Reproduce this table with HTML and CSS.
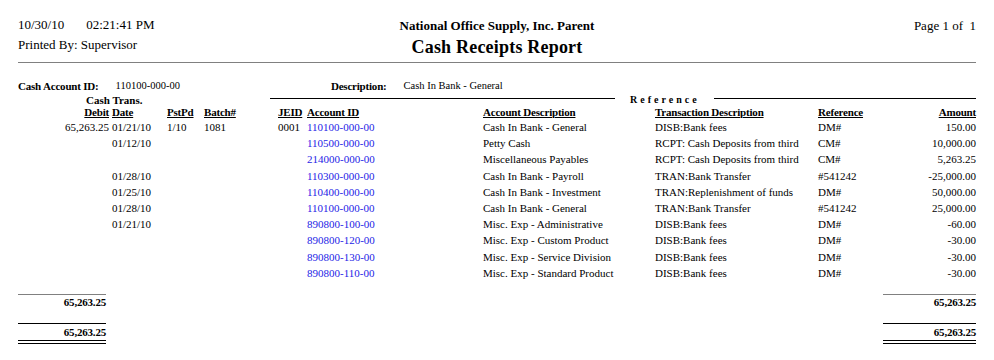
FILE: index.html
```html
<!DOCTYPE html>
<html>
<head>
<meta charset="utf-8">
<link rel="stylesheet" href="styles.css">
</head>
<body>
<div class="page">
  <header class="top">
    <div class="top-left">
      <div class="stamp"><span>10/30/10</span><span class="time">02:21:41 PM</span></div>
      <div>Printed By: Supervisor</div>
    </div>
    <div class="top-center">
      <div class="company">National Office Supply, Inc. Parent</div>
      <div class="title">Cash Receipts Report</div>
    </div>
    <div class="top-right">Page 1 of &nbsp;1</div>
  </header>

  <div class="account">
    <span class="lbl">Cash Account ID:</span><span class="val acct-val">110100-000-00</span>
    <span class="lbl desc-lbl">Description:</span><span class="val">Cash In Bank - General</span>
  </div>

  <div class="group-row">
    <div class="cash-trans">Cash Trans.</div>
    <div class="ref-group">
      <span class="rule rule-left"></span>
      <span class="ref-title">Reference</span>
      <span class="rule rule-right"></span>
    </div>
  </div>

  <div class="grid head">
    <div class="r"><u>Debit</u></div>
    <div><u>Date</u></div>
    <div><u>PstPd</u></div>
    <div><u>Batch#</u></div>
    <div><u>JEID</u></div>
    <div><u>Account ID</u></div>
    <div><u>Account Description</u></div>
    <div><u>Transaction Description</u></div>
    <div><u>Reference</u></div>
    <div class="r amt"><u>Amount</u></div>
  </div>

  <div class="grid body">
    <div class="r">65,263.25</div><div>01/21/10</div><div>1/10</div><div>1081</div><div>0001</div><div class="link">110100-000-00</div><div>Cash In Bank - General</div><div>DISB:Bank fees</div><div>DM#</div><div class="r amt">150.00</div>
    <div class="r"></div><div>01/12/10</div><div></div><div></div><div></div><div class="link">110500-000-00</div><div>Petty Cash</div><div>RCPT: Cash Deposits from third</div><div>CM#</div><div class="r amt">10,000.00</div>
    <div class="r"></div><div></div><div></div><div></div><div></div><div class="link">214000-000-00</div><div>Miscellaneous Payables</div><div>RCPT: Cash Deposits from third</div><div>CM#</div><div class="r amt">5,263.25</div>
    <div class="r"></div><div>01/28/10</div><div></div><div></div><div></div><div class="link">110300-000-00</div><div>Cash In Bank - Payroll</div><div>TRAN:Bank Transfer</div><div>#541242</div><div class="r amt">-25,000.00</div>
    <div class="r"></div><div>01/25/10</div><div></div><div></div><div></div><div class="link">110400-000-00</div><div>Cash In Bank - Investment</div><div>TRAN:Replenishment of funds</div><div>DM#</div><div class="r amt">50,000.00</div>
    <div class="r"></div><div>01/28/10</div><div></div><div></div><div></div><div class="link">110100-000-00</div><div>Cash In Bank - General</div><div>TRAN:Bank Transfer</div><div>#541242</div><div class="r amt">25,000.00</div>
    <div class="r"></div><div>01/21/10</div><div></div><div></div><div></div><div class="link">890800-100-00</div><div>Misc. Exp - Administrative</div><div>DISB:Bank fees</div><div>DM#</div><div class="r amt">-60.00</div>
    <div class="r"></div><div></div><div></div><div></div><div></div><div class="link">890800-120-00</div><div>Misc. Exp - Custom Product</div><div>DISB:Bank fees</div><div>DM#</div><div class="r amt">-30.00</div>
    <div class="r"></div><div></div><div></div><div></div><div></div><div class="link">890800-130-00</div><div>Misc. Exp - Service Division</div><div>DISB:Bank fees</div><div>DM#</div><div class="r amt">-30.00</div>
    <div class="r"></div><div></div><div></div><div></div><div></div><div class="link">890800-110-00</div><div>Misc. Exp - Standard Product</div><div>DISB:Bank fees</div><div>DM#</div><div class="r amt">-30.00</div>
  </div>

  <div class="totals">
    <div class="tot-col tot-left">
      <div class="sub">65,263.25</div>
      <div class="grand">65,263.25</div>
    </div>
    <div class="tot-col tot-right">
      <div class="sub">65,263.25</div>
      <div class="grand">65,263.25</div>
    </div>
  </div>
</div>
</body>
</html>
```

FILE: styles.css
```css
html, body {
  margin: 0;
  padding: 0;
  background: #ffffff;
}
body {
  font-family: "Liberation Serif", "Times New Roman", serif;
  color: #000000;
  font-size: 11px;
}
.page {
  width: 958px;
  padding: 0 18px;
}
.top {
  display: grid;
  grid-template-columns: 1fr auto 1fr;
  height: 47px;
  padding-top: 15px;
  border-bottom: 1px solid #808080;
  font-size: 13px;
}
.top-left {
  line-height: 20px;
}
.stamp .time {
  margin-left: 22px;
}
.top-center {
  text-align: center;
  font-weight: bold;
}
.company {
  font-size: 13px;
  line-height: 21px;
}
.title {
  font-size: 18px;
  line-height: 22px;
  letter-spacing: 0.2px;
}
.top-right {
  text-align: right;
  line-height: 22px;
}
.account {
  margin-top: 16px;
  height: 14px;
  line-height: 14px;
  display: flex;
}
.lbl {
  font-weight: bold;
  letter-spacing: -0.2px;
}
.acct-val {
  margin-left: 17px;
}
.desc-lbl {
  margin-left: 151px;
}
.desc-lbl + .val {
  margin-left: 17px;
}
.val {
  font-size: 10.5px;
}
.group-row {
  display: flex;
  height: 12px;
  align-items: center;
}
.cash-trans {
  box-sizing: border-box;
  font-weight: bold;
  width: 252px;
  padding-left: 68px;
  line-height: 12px;
  padding-top: 1px;
}
.ref-group {
  flex: 1;
  display: flex;
  align-items: center;
}
.rule {
  height: 1px;
  background: #000000;
}
.rule-left {
  width: 345px;
  margin-top: -2px;
}
.rule-right {
  flex: 1;
  margin-top: -2px;
}
.ref-title {
  font-weight: bold;
  font-size: 10px;
  letter-spacing: 3px;
  margin: 0 14px 0 15px;
}
.grid {
  display: grid;
  grid-template-columns: 94px 55px 37px 74px 29px 176px 172px 163px 62px 96px;
}
.grid > div {
  white-space: nowrap;
}
.grid .r {
  text-align: right;
  padding-right: 3px;
}
.grid .amt {
  padding-right: 0;
}
.head {
  height: 14px;
  line-height: 14px;
  font-weight: bold;
  letter-spacing: -0.2px;
}
.head u {
  text-decoration-thickness: 1px;
  text-underline-offset: 1px;
}
.body {
  grid-auto-rows: 16.2px;
  line-height: 16px;
}
.link {
  color: #2424e6;
}
.totals {
  display: flex;
  justify-content: space-between;
  margin-top: 13px;
  font-weight: bold;
  letter-spacing: -0.2px;
}
.tot-left {
  width: 88px;
}
.tot-right {
  width: 93px;
}
.sub {
  border-top: 1px solid #808080;
  text-align: right;
  line-height: 15px;
  height: 15px;
}
.grand {
  margin-top: 13px;
  border-top: 1px solid #000000;
  border-bottom: 4px double #000000;
  text-align: right;
  line-height: 16px;
  height: 16px;
}
```
